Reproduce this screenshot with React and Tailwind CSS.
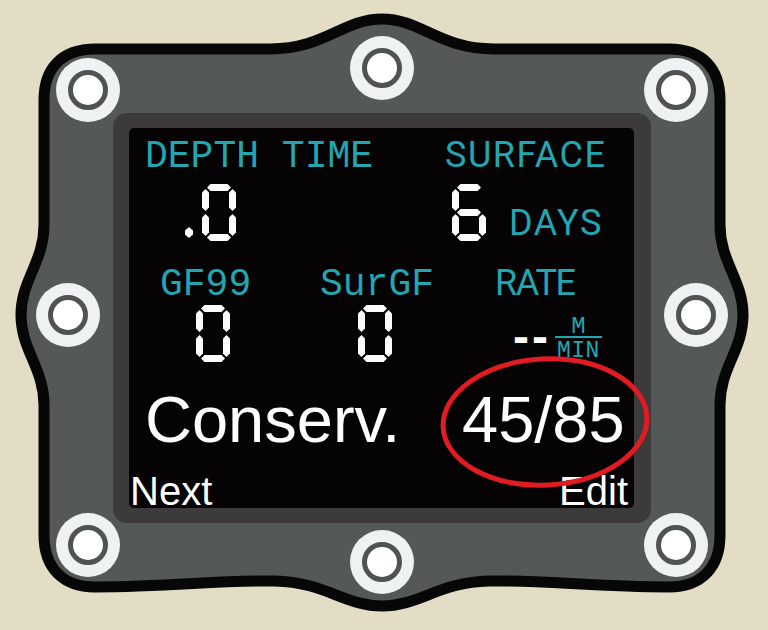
import React from "react";

// Seven-segment digit geometry (34 x 57 cell, 7px thick segments)
const hSeg = (cy) =>
  `5,${cy} 8.5,${cy - 3.5} 25.5,${cy - 3.5} 29,${cy} 25.5,${cy + 3.5} 8.5,${cy + 3.5}`;
const vSeg = (cx, a, b) =>
  `${cx},${a} ${cx + 3.5},${a + 3.5} ${cx + 3.5},${b - 3.5} ${cx},${b} ${cx - 3.5},${b - 3.5} ${cx - 3.5},${a + 3.5}`;

const SEGMENTS = {
  a: hSeg(3.5),
  b: vSeg(30.5, 5, 27),
  c: vSeg(30.5, 30, 52),
  d: hSeg(53.5),
  e: vSeg(3.5, 30, 52),
  f: vSeg(3.5, 5, 27),
  g: hSeg(28.5),
};

const DIGITS = {
  0: "abcdef",
  6: "acdefg",
};

function SegDigit({ value }) {
  const lit = DIGITS[value];
  return (
    <span className="relative block w-[34px] h-[57px] shrink-0">
      <svg width="34" height="57" viewBox="0 0 34 57" aria-hidden="true" className="block">
        {lit.split("").map((s) => (
          <polygon key={s} points={SEGMENTS[s]} fill="#fbfbfb" />
        ))}
      </svg>
      {/* readable value kept under the segment drawing */}
      <span className="absolute inset-0 flex items-center justify-center font-['Liberation_Mono',monospace] text-[44px] leading-none text-transparent select-text">
        {value}
      </span>
    </span>
  );
}

function SegDot() {
  return (
    <span className="relative block w-[8px] h-[11px] shrink-0">
      <svg width="8" height="11" viewBox="0 0 8 11" aria-hidden="true" className="block">
        <polygon points="4,0 8,3.5 8,7.5 4,11 0,7.5 0,3.5" fill="#fbfbfb" />
      </svg>
      <span className="absolute inset-0 flex items-end justify-center font-['Liberation_Mono',monospace] text-[10px] leading-none text-transparent">
        .
      </span>
    </span>
  );
}

const SCREWS = [
  [88, 90],
  [382, 68],
  [676, 90],
  [68, 315],
  [696, 315],
  [88, 545],
  [382, 562],
  [676, 545],
];

const HOUSING_PATH =
  "M95 49 L270 49 C325 49 343 19 382 19 C421 19 439 49 494 49 L669 49 " +
  "C702 49 720 68 720 100 L720 225 C720 262 743 280 743 315 C743 350 720 368 720 405 " +
  "L720 535 C720 567 702 587 669 587 C594 587 544 580 489 581 C439 582 419 606 382 606 " +
  "C345 606 325 582 275 581 C220 580 170 587 95 587 C62 587 44 567 44 535 L44 405 " +
  "C44 368 21 350 21 315 C21 280 44 262 44 225 L44 100 C44 68 62 49 95 49 Z";

function Housing() {
  return (
    <svg
      className="absolute inset-0"
      width="768"
      height="630"
      viewBox="0 0 768 630"
      aria-hidden="true"
    >
      <path d={HOUSING_PATH} fill="#545857" stroke="#070707" strokeWidth="11" strokeLinejoin="round" />
      {SCREWS.map(([x, y]) => (
        <g key={`${x}-${y}`}>
          <circle cx={x} cy={y} r="32" fill="#eef2f3" />
          <circle cx={x} cy={y} r="17.5" fill="#ffffff" stroke="#4f5352" strokeWidth="5" />
        </g>
      ))}
    </svg>
  );
}

const mono = "font-['Liberation_Mono',monospace]";
const narrow = "font-['Liberation_Sans_Narrow','Roboto',sans-serif]";
const sans = "font-['Liberation_Sans',Arial,sans-serif]";
const teal = "text-[#22a6b1]";

function Screen() {
  return (
    <div className="w-[505px] h-[380px] rounded-[5px] bg-[#060304] flex flex-col text-white">
      {/* labels: depth / time / surface */}
      <div className="shrink-0 mt-[9px] h-[36px] pl-[16px] flex items-baseline leading-none">
        <span className={`${mono} ${teal} text-[38px] w-[300px] whitespace-pre`}>DEPTH TIME</span>
        <span className={`${narrow} ${teal} text-[36px] tracking-[1.5px]`}>SURFACE</span>
      </div>

      {/* values: depth and surface interval */}
      <div className="shrink-0 mt-[10px] h-[58px] pl-[56px] flex items-end leading-none">
        <span className="mb-[3px]">
          <SegDot />
        </span>
        <span className="ml-[9px]">
          <SegDigit value="0" />
        </span>
        <span className="ml-[216px]">
          <SegDigit value="6" />
        </span>
        <span className={`${narrow} ${teal} ml-[23px] text-[36px] tracking-[1.5px]`}>DAYS</span>
      </div>

      {/* labels: gradient factors / rate */}
      <div className="shrink-0 mt-[27px] h-[36px] pl-[31px] flex items-baseline leading-[30px]">
        <span className={`${mono} ${teal} text-[38px] w-[160px]`}>GF99</span>
        <span className={`${mono} ${teal} text-[38px] w-[175px]`}>SurGF</span>
        <span className={`${narrow} ${teal} text-[36px] tracking-[-1.5px]`}>RATE</span>
      </div>

      {/* values: gradient factors / ascent rate */}
      <div className="shrink-0 mt-[1px] h-[57px] pl-[67px] flex items-start leading-none">
        <SegDigit value="0" />
        <span className="ml-[128px]">
          <SegDigit value="0" />
        </span>
        <span className={`${sans} ml-[121px] mt-[8px] text-[48px] font-bold tracking-[3px]`}>--</span>
        <div className={`${mono} ${teal} ml-[4px] mt-[13px] w-[47px] flex flex-col items-center`}>
          <span className="text-[24px] leading-[18px]">M</span>
          <span className="w-full h-[2px] bg-[#22a6b1]" />
          <span className="mt-[5px] text-[23px] leading-[17px] tracking-[0.5px]">MIN</span>
        </div>
      </div>

      {/* conservatism setting */}
      <div className={`${sans} shrink-0 mt-[25px] h-[65px] pl-[16px] flex items-baseline leading-none text-[65px]`}>
        <span className="w-[317px]">Conserv.</span>
        <span>45/85</span>
      </div>

      {/* soft-key captions */}
      <div className={`${sans} shrink-0 mt-[19px] h-[37px] pl-[1px] pr-[6px] flex justify-between leading-none text-[40px]`}>
        <span>Next</span>
        <span>Edit</span>
      </div>
    </div>
  );
}

export default function App() {
  return (
    <div className="relative w-[768px] h-[630px] overflow-hidden bg-[#e4ddc6]">
      <Housing />
      <div className="relative pt-[113px] pl-[113px]">
        <div className="w-[538px] h-[410px] rounded-[14px] bg-[#3d3a3b] pt-[15px] pl-[16px]">
          <Screen />
        </div>
      </div>
      <svg
        className="absolute inset-0 pointer-events-none"
        width="768"
        height="630"
        viewBox="0 0 768 630"
        aria-hidden="true"
      >
        <ellipse
          cx="545"
          cy="422"
          rx="102"
          ry="63"
          transform="rotate(-3 545 422)"
          fill="none"
          stroke="#e11b22"
          strokeWidth="5"
        />
      </svg>
    </div>
  );
}
